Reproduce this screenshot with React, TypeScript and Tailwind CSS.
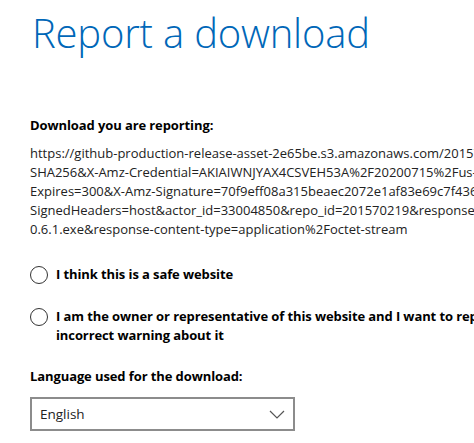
const urlLines = [
  "https://github-production-release-asset-2e65be.s3.amazonaws.com/201570219/ab12",
  "SHA256&X-Amz-Credential=AKIAIWNJYAX4CSVEH53A%2F20200715%2Fus-east-1%2Fs3%2Faws4_request",
  "Expires=300&X-Amz-Signature=70f9eff08a315beaec2072e1af83e69c7f436b1d2e8a",
  "SignedHeaders=host&actor_id=33004850&repo_id=201570219&response-content-disposition",
  "0.6.1.exe&response-content-type=application%2Foctet-stream",
];

function Radio({ lines }: { lines: string[] }) {
  return (
    <label className="flex items-start gap-[8px]">
      <span className="mt-[1px] h-[18px] w-[18px] shrink-0 rounded-full border-[1.5px] border-[#333]" />
      <span className="text-[13px] font-bold leading-[19px] tracking-[-0.1px] text-black">
        {lines.map((l) => (
          <span key={l} className="block whitespace-nowrap">
            {l}
          </span>
        ))}
      </span>
    </label>
  );
}

export default function App() {
  return (
    <div
      className="h-[443px] w-[474px] overflow-hidden bg-white"
      style={{ fontFamily: '"Open Sans", "Noto Sans", sans-serif' }}
    >
      <div className="w-[700px] pl-[30px]">
        <h1 className="pt-[5px] pl-[2px] text-[40px] font-light leading-[56px] tracking-[-0.2px] text-[#0067b8]">
          Report a download
        </h1>

        <h2 className="mt-[55px] text-[13px] font-bold leading-[19px] tracking-[-0.1px] text-black">
          Download you are reporting:
        </h2>

        <div className="mt-[9px] text-[13px] leading-[19px] text-[#222]">
          {urlLines.map((l) => (
            <div key={l} className="whitespace-nowrap">
              {l}
            </div>
          ))}
        </div>

        <div className="mt-[26px] flex flex-col gap-[23px]">
          <Radio lines={["I think this is a safe website"]} />
          <Radio
            lines={[
              "I am the owner or representative of this website and I want to report an",
              "incorrect warning about it",
            ]}
          />
        </div>

        <h2 className="mt-[22px] text-[13px] font-bold leading-[19px] tracking-[-0.1px] text-black">
          Language used for the download:
        </h2>

        <div className="mt-[11px] flex h-[34px] w-[265px] items-center justify-between border-2 border-[#8c8c8c] pl-[8px] pr-[8px] text-[13.5px] text-[#222]">
          <span>English</span>
          <svg width="16" height="9" viewBox="0 0 16 9" fill="none">
            <path d="M1 1l7 7 7-7" stroke="#555" strokeWidth="1.2" />
          </svg>
        </div>
      </div>
    </div>
  );
}
